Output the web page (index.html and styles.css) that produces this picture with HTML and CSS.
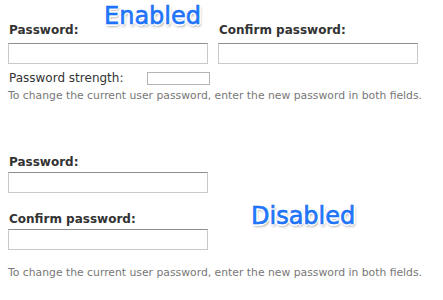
FILE: index.html
```html
<!DOCTYPE html>
<html>
<head>
<meta charset="utf-8">
<link rel="stylesheet" href="styles.css">
</head>
<body>
<div class="page">
  <section class="panel panel-enabled">
    <div class="row">
      <div class="field">
        <label class="label">Password:</label>
        <input class="box" type="password">
      </div>
      <div class="field">
        <label class="label">Confirm password:</label>
        <input class="box" type="password">
      </div>
    </div>
    <div class="strength">
      <span class="strength-label">Password strength:</span>
      <span class="meter"></span>
    </div>
    <p class="help">To change the current user password, enter the new password in both fields.</p>
    <span class="tag tag-enabled">Enabled</span>
  </section>

  <section class="panel panel-disabled">
    <div class="field">
      <label class="label">Password:</label>
      <input class="box" type="password" disabled>
    </div>
    <div class="field field-second">
      <label class="label">Confirm password:</label>
      <input class="box" type="password" disabled>
    </div>
    <p class="help help-bottom">To change the current user password, enter the new password in both fields.</p>
    <span class="tag tag-disabled">Disabled</span>
  </section>
</div>
</body>
</html>
```

FILE: styles.css
```css
html, body {
  margin: 0;
  padding: 0;
  background: #fff;
}

.page {
  font-family: "DejaVu Sans", Verdana, sans-serif;
  color: #333;
  padding: 0 8px;
  width: 427px;
}

.panel {
  position: relative;
}

.panel-enabled {
  padding-top: 23px;
}

.panel-disabled {
  padding-top: 52px;
}

.row {
  display: flex;
  gap: 10px;
}

.field {
  display: flex;
  flex-direction: column;
}

.field-second {
  margin-top: 19px;
}

.label {
  font-size: 12px;
  font-weight: bold;
  line-height: 15px;
  margin: 0 0 5px 1px;
  color: #333;
}

.panel-disabled .label {
  margin-bottom: 2px;
}

.box {
  box-sizing: border-box;
  width: 200px;
  height: 21px;
  margin: 0;
  padding: 0;
  background: #fff;
  border: 1px solid #c9c9c9;
  border-top-color: #8e8e8e;
  border-radius: 0;
  outline: none;
}

.strength {
  display: flex;
  align-items: center;
  margin-top: 7px;
  height: 14px;
}

.strength-label {
  font-size: 12px;
  line-height: 14px;
  margin-left: 1px;
  width: 138px;
  color: #333;
}

.meter {
  box-sizing: border-box;
  width: 63px;
  height: 13px;
  border: 1px solid #b4b4b4;
  background: #fff;
}

.help {
  margin: 4px 0 0 0;
  font-size: 10.8px;
  line-height: 14px;
  color: #777;
  white-space: nowrap;
}

.help-bottom {
  margin-top: 16px;
}

.tag {
  position: absolute;
  font-family: "DejaVu Sans", "Lucida Grande", sans-serif;
  font-size: 24px;
  line-height: 28px;
  color: #1f78ff;
  -webkit-text-stroke: 0.6px #1a6cf0;
  text-shadow:
    1px 0 0 #fff, -1px 0 0 #fff, 0 1px 0 #fff, 0 -1px 0 #fff,
    1px 1px 0 #fff, -1px -1px 0 #fff, 1px -1px 0 #fff, -1px 1px 0 #fff,
    2px 0 0 #fff, -2px 0 0 #fff, 0 2px 0 #fff, 0 -2px 0 #fff,
    1px 2px 3px rgba(0, 0, 0, 0.6);
  white-space: nowrap;
}

.tag-enabled {
  left: 96px;
  top: 2px;
}

.tag-disabled {
  left: 243px;
  top: 99px;
}
```
